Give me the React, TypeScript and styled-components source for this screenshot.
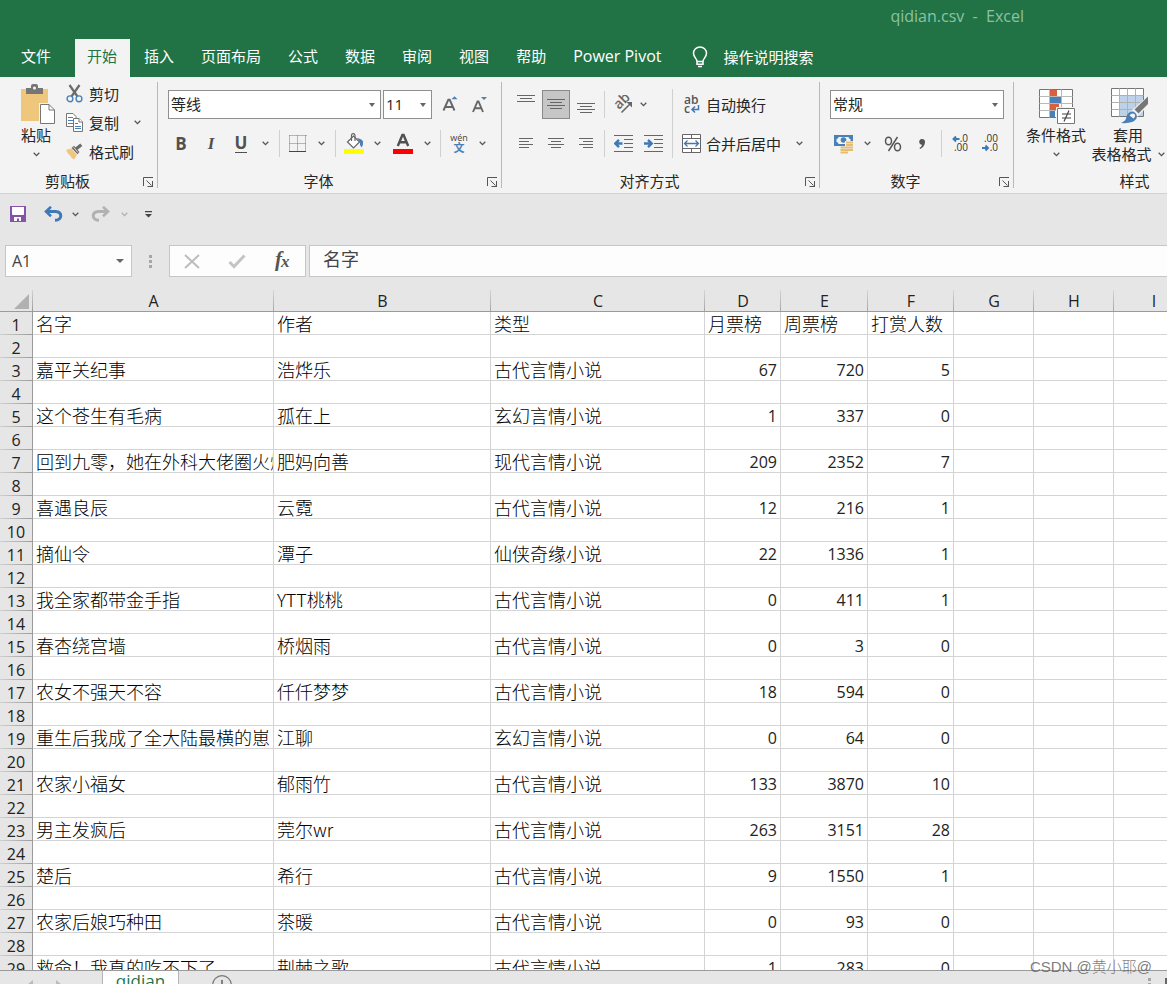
import React from "react";
import styled, { createGlobalStyle } from "styled-components";

const GlobalStyle = createGlobalStyle`
  *, *::before, *::after { box-sizing: border-box; }
  body { margin: 0; overflow: hidden; }
  button, input, select { font: inherit; color: inherit; }
`;

const ui = `"Open Sans", "Noto Sans CJK SC", sans-serif`;

const Shell = styled.div`
  position: relative;
  display: flex;
  flex-direction: column;
  height: 100vh;
  overflow: hidden;
  background: #e6e6e6;
  color: #262626;
  font-family: ${ui};
  font-size: 15px;
  line-height: 20px;
`;

/* Title bar and ribbon tabs */

const TopBar = styled.header`
  flex: none;
  background: #217346;
  color: #fff;
`;

const TitleRow = styled.div`
  display: flex;
  justify-content: flex-end;
  height: 39px;
  padding: 6px 143px 0 0;
  color: #8cc2a3;
  font-size: 16px;
  white-space: pre;
`;

const Tabs = styled.nav`
  display: flex;
  height: 38px;
`;

const Tab = styled.button<{ $active?: boolean; $file?: boolean; $latin?: boolean }>`
  flex: none;
  height: 38px;
  padding: ${(p) => (p.$file ? "0 24px 4px 21px" : p.$active ? "0 13px 4px 12px" : "0 13px 4px 14px")};
  border: 0;
  background: ${(p) => (p.$active ? "#f3f3f3" : "transparent")};
  color: ${(p) => (p.$active ? "#217346" : "#fff")};
  font-size: ${(p) => (p.$latin ? 16 : 15)}px;
  white-space: nowrap;
`;

const TellMe = styled.button`
  display: flex;
  align-items: center;
  gap: 15px;
  height: 38px;
  margin-left: 18px;
  padding: 0 0 2px;
  border: 0;
  background: transparent;
`;

/* Ribbon */

const Ribbon = styled.section`
  display: flex;
  flex: none;
  height: 117px;
  padding-top: 2px;
  overflow: hidden;
  background: #f3f3f3;
  border-bottom: 1px solid #d2d2d2;
`;

const Group = styled.div<{ $w: number }>`
  flex: none;
  width: ${(p) => p.$w}px;
  height: 109px;
  background: linear-gradient(#b8b8b8, #b8b8b8) right bottom / 1px 106px no-repeat;
`;

const GroupBody = styled.div<{ $pad: number; $gap?: number }>`
  display: flex;
  gap: ${(p) => p.$gap || 0}px;
  height: 94px;
  padding-left: ${(p) => p.$pad}px;
`;

const GroupFooter = styled.div`
  display: grid;
  grid-template-columns: 1fr 15px;
  gap: 0 8px;
  align-items: center;
  height: 16px;
  line-height: 16px;
  text-align: center;
`;

const Bare = styled.button<{ $w?: number; $h?: number }>`
  display: flex;
  flex: none;
  align-items: center;
  justify-content: center;
  width: ${(p) => (p.$w ? p.$w + "px" : "auto")};
  height: ${(p) => (p.$h ? p.$h + "px" : "auto")};
  padding: 0;
  border: 0;
  background: transparent;
  white-space: nowrap;
`;

const LauncherButton = styled(Bare)`
  justify-content: flex-start;
`;

const AlignButton = styled(Bare)<{ $pressed?: boolean }>`
  width: 28px;
  height: 29px;
  margin: 0 1px;
  border: 1px solid ${(p) => (p.$pressed ? "#8a8a8a" : "transparent")};
  background: ${(p) => (p.$pressed ? "#c6c6c6" : "transparent")};
`;

const Letter = styled.span<{ $kind: "b" | "i" | "u" }>`
  color: #505050;
  font-size: 17px;
  font-weight: 700;
  font-family: ${(p) => (p.$kind === "i" ? '"Liberation Serif", serif' : ui)};
  font-style: ${(p) => (p.$kind === "i" ? "italic" : "normal")};
  line-height: 18px;
  border-bottom: ${(p) => (p.$kind === "u" ? "1px solid #505050" : "0")};
`;

const Rule = styled.span<{ $w: number; $h?: number }>`
  flex: none;
  width: ${(p) => p.$w}px;
  height: ${(p) => p.$h || 27}px;
  background: linear-gradient(#d0d0d0, #d0d0d0) center / 1px 100% no-repeat;
`;

const Row = styled.div<{ $pad?: number }>`
  display: flex;
  align-items: center;
  height: 39px;
  padding-left: ${(p) => p.$pad || 0}px;
`;

const Stack = styled.div<{ $top?: number; $w?: number }>`
  display: flex;
  flex: none;
  flex-direction: column;
  width: ${(p) => (p.$w ? p.$w + "px" : "auto")};
  padding-top: ${(p) => p.$top || 0}px;
`;

const BigButton = styled.button<{ $w: number }>`
  display: flex;
  flex: none;
  flex-direction: column;
  align-items: center;
  width: ${(p) => p.$w}px;
  height: 91px;
  padding: 5px 0 0;
  border: 0;
  background: transparent;
  line-height: 19px;
  white-space: nowrap;
`;

const BigIcon = styled.span`
  display: block;
  height: 42px;
`;

const ChevronLine = styled.span`
  display: flex;
  align-items: center;
  gap: 6px;
  height: 19px;
`;

const ClipRow = styled.div`
  display: flex;
  align-items: center;
  height: 29px;
`;

const ClipButton = styled(Bare)`
  gap: 6px;
  margin-right: 10px;
`;

const WideButton = styled(Bare)`
  gap: 5px;
  margin-right: 9px;
`;

const Combo = styled.label<{ $w: number }>`
  position: relative;
  flex: none;
  width: ${(p) => p.$w}px;
  height: 29px;
  margin-right: 2px;
  background: #fff;
  border: 1px solid #8f8f8f;
`;

const ComboSelect = styled.select`
  width: 100%;
  height: 27px;
  padding: 0 2px 2px;
  border: 0;
  background: transparent;
  appearance: none;
  outline: 0;
`;

const ComboArrow = styled.span<{ $wide?: boolean }>`
  position: absolute;
  top: 50%;
  right: ${(p) => (p.$wide ? 7 : 5)}px;
  margin-top: -2px;
  border: solid transparent;
  border-width: ${(p) => (p.$wide ? "4px 4px 0" : "4px 3px 0")};
  border-top-color: #666;
  pointer-events: none;
`;

/* Quick access and formula bar */

const QuickAccess = styled.div`
  display: flex;
  flex: none;
  align-items: center;
  height: 51px;
  padding-bottom: 11px;
`;

const FormulaBar = styled.div`
  display: flex;
  flex: none;
  height: 32px;
  margin-bottom: 13px;
  padding-left: 5px;
`;

const NameBox = styled.label`
  position: relative;
  width: 127px;
  background: #fdfdfd;
  border: 1px solid #c6c6c6;
`;

const PlainInput = styled.input<{ $size: number; $pad: number }>`
  width: 100%;
  height: 30px;
  padding: 0 0 ${(p) => (p.$size > 16 ? 6 : 0)}px ${(p) => p.$pad}px;
  border: 0;
  background: transparent;
  color: #444;
  font-size: ${(p) => p.$size}px;
  outline: 0;
`;

const Grip = styled.span`
  display: flex;
  align-items: center;
  justify-content: center;
  width: 37px;
`;

const EntryButtons = styled.div`
  display: flex;
  align-items: center;
  width: 137px;
  margin-right: 3px;
  background: #fdfdfd;
  border: 1px solid #c6c6c6;
`;

const FormulaField = styled.div`
  flex: 1;
  background: #fdfdfd;
  border: 1px solid #c6c6c6;
  border-right: 0;
`;

/* Worksheet */

const SheetArea = styled.main`
  flex: 1;
  min-height: 0;
  overflow: hidden;
`;

const Sheet = styled.table`
  width: max(100%, 1194px);
  table-layout: fixed;
  border-collapse: separate;
  border-spacing: 0;
  background: #fff;
  color: #000;
  font-family: "Noto Sans CJK SC", sans-serif;
  font-size: 18px;
  font-weight: 300;
  line-height: 22px;
`;

const Col = styled.col<{ $w?: number }>`
  width: ${(p) => (p.$w ? p.$w + "px" : "auto")};
`;

const headType = `
  font-family: "Open Sans", sans-serif;
  font-size: 16px;
  font-weight: 400;
  color: #222;
  text-align: center;
`;

const ColHead = styled.th`
  ${headType}
  height: 22px;
  padding: 1px 0 0;
  line-height: 20px;
  border-bottom: 1px solid #9b9b9b;
  background: linear-gradient(#d4d4d4, #a6a6a6) right / 1px 100% no-repeat #e6e6e6;
`;

const Corner = styled(ColHead)`
  background: linear-gradient(#d4d4d4, #9b9b9b) right / 1px 100% no-repeat #e6e6e6;
  & > svg { display: block; margin: 0 0 0 14px; }
`;

const RowHead = styled.th`
  ${headType}
  height: 23px;
  padding: 2px 0 0;
  line-height: 20px;
  border-right: 1px solid #9b9b9b;
  background: linear-gradient(to right, #d0d0d0, #9b9b9b) bottom / 100% 1px no-repeat #e6e6e6;
`;

const Cell = styled.td<{ $num?: boolean }>`
  height: 23px;
  padding: ${(p) => (p.$num ? "2px 3px 0 0" : "0 0 0 3px")};
  overflow: hidden;
  border-right: 1px solid #d4d4d4;
  border-bottom: 1px solid #d4d4d4;
  font-family: ${(p) => (p.$num ? '"Open Sans", sans-serif' : "inherit")};
  font-size: ${(p) => (p.$num ? 16 : 18)}px;
  font-weight: ${(p) => (p.$num ? 400 : 300)};
  color: ${(p) => (p.$num ? "#222" : "#000")};
  line-height: ${(p) => (p.$num ? 20 : 22)}px;
  text-align: ${(p) => (p.$num ? "right" : "left")};
  white-space: nowrap;
`;

const SheetBar = styled.footer`
  display: flex;
  flex: none;
  height: 14px;
  overflow: hidden;
  border-top: 1px solid #9b9b9b;
`;

const SheetArrows = styled.div`
  display: flex;
  gap: 23px;
  width: 102px;
  padding: 9px 0 0 27px;
`;

const SheetTab = styled.button`
  width: 77px;
  height: 26px;
  padding: 0 0 6px;
  border: solid #b5b5b5;
  border-width: 0 1px;
  background: #fff;
  color: #217346;
  font-size: 17px;
`;

const AddSheet = styled(Bare)`
  align-self: flex-start;
  margin: 4px auto 0 33px;
`;

const BarEnd = styled.span`
  display: flex;
  gap: 14px;
  padding-top: 7px;
`;

const Watermark = styled.div`
  position: absolute;
  right: 15px;
  bottom: 7px;
  color: rgba(90, 90, 90, 0.8);
  font-family: "Liberation Sans", "Noto Sans CJK SC", sans-serif;
  font-size: 15px;
  font-weight: 300;
`;

/* Icons */

const Chevron = ({ color = "#555" }: { color?: string }) => (
  <svg width="7" height="5" viewBox="0 0 7 5" fill="none" stroke={color} strokeWidth="1.3">
    <path d="M.7 .8 3.5 3.6 6.3 .8" />
  </svg>
);

const Drop = ({ w, label, color }: { w: number; label: string; color?: string }) => (
  <Bare $w={w} $h={24} aria-label={label}>
    <Chevron color={color} />
  </Bare>
);

const Launcher = ({ label }: { label: string }) => (
  <LauncherButton aria-label={label}>
    <svg width="11" height="11" viewBox="0 0 11 11" fill="none" stroke="#555">
      <path d="M.5 10V1.5H10M3.5 4.5 8.5 9.5M9.5 5V10.5M10 10.500H4.5" />
    </svg>
  </LauncherButton>
);

const Bulb = () => (
  <svg width="16" height="22" viewBox="0 0 16 22" fill="none" stroke="#fff" strokeWidth="1.5">
    <path d="M5 15.5C5 12.5 1.5 11.5 1.5 7.3A6.5 6.4 0 0 1 14.5 7.3C14.5 11.5 11 12.5 11 15.5V18.2H5ZM5 15.6H11M6 20.6H10" />
  </svg>
);

const PasteIcon = () => (
  <svg width="40" height="40" viewBox="-4 0 40 40">
    <path d="M1 5H28V37H1Z" fill="#eec77d" />
    <path d="M6 4H11V2Q11 0 13 0H16Q18 0 18 2V4H23V10H6Z" fill="#767676" />
    <circle cx="14.5" cy="4" r="1.6" fill="#f3f3f3" />
    <path d="M19 19H29L36 26V40H19Z" fill="#f3f3f3" />
    <path d="M20.5 20.5H29L34.5 26V39.5H20.5Z" fill="#fff" stroke="#767676" />
    <path d="M29 20.5V26H34.5" fill="none" stroke="#767676" />
  </svg>
);

const CutIcon = () => (
  <svg width="17" height="19" viewBox="0 0 17 19" fill="none">
    <path d="M3.5 1 11.5 12.5M13.5 1 5.5 12.5" stroke="#6b6b6b" strokeWidth="2.2" />
    <circle cx="4" cy="14.8" r="2.9" stroke="#4a80b8" strokeWidth="1.4" />
    <circle cx="13" cy="14.8" r="2.9" stroke="#4a80b8" strokeWidth="1.4" />
  </svg>
);

const CopyIcon = () => (
  <svg width="17" height="19" viewBox="0 0 17 19" fill="#fff" stroke="#767676">
    <path d="M.5 .5H7L10 3.5V13.5H.5Z" />
    <path d="M2 4.5H7M2 7.5H7M2 10.5H7" stroke="#4a80b8" />
    <path d="M7.5 5.5H13L16.5 9V18.5H7.5Z" />
    <path d="M13 5.5V9H16.5" />
    <path d="M9 10.5H12M9 13.5H15M9 15.5H15" stroke="#4a80b8" />
  </svg>
);

const BrushIcon = () => (
  <svg width="17" height="17" viewBox="0 0 17 17">
    <path d="M0 7 5 5.5 11 12 8 16.5Q5 15 4.5 13L3.5 12Q1.5 10.5 0 7Z" fill="#eec77d" />
    <path d="M5.5 5 8 2.8 13.5 9 11.5 11.2Z" fill="#6b6b6b" />
    <path d="M10 6 15.3 1.8" stroke="#6b6b6b" strokeWidth="3.2" />
    <path d="M7.5 4.2 12 9.5" stroke="#f3f3f3" strokeWidth=".8" />
  </svg>
);

const GrowIcon = ({ down }: { down?: boolean }) => (
  <svg width="17" height="18" viewBox="0 0 17 18">
    <path
      d={down ? "M2 16 6.5 5.5H7.5L12 16M3.8 12.3H10.2" : "M1.5 14.5 6.3 3.8H7.7L12.5 14.5M3.5 11H10.5"}
      fill="none"
      stroke="#666"
      strokeWidth="1.9"
    />
    <path d={down ? "M10 1H16L13 4Z" : "M9.5 3.2H15.5L12.5 .2Z"} fill="#4a80b8" />
  </svg>
);

const BorderIcon = () => (
  <svg width="18" height="18" viewBox="0 0 18 18" fill="none" stroke="#777">
    <path d="M.5 .5H17.5M.5 .5V16M8.5 .5V16M16.5 .5V16M.5 8.5H17" strokeDasharray="1 1" />
    <path d="M0 16.5H17" stroke="#444" />
  </svg>
);

const FillIcon = () => (
  <svg width="20" height="21" viewBox="0 0 20 21">
    <path d="M4 8.5 9.5 3 15.5 9 9.5 15 3.5 9Z" fill="#fff" stroke="#666" strokeWidth="1.2" />
    <path d="M7.5 8V2.5Q7.5 .7 9.2 .7T11 2.5V8" fill="none" stroke="#666" strokeWidth="1.2" />
    <path d="M12.5 5Q18 5.5 19 8.5 19.6 12 17.5 14.5L16 12Q16.5 8.5 12.5 5Z" fill="#4a80b8" />
    <path d="M0 16H20V21H0Z" fill="#ff0" />
  </svg>
);

const FontColorIcon = () => (
  <svg width="20" height="21" viewBox="0 0 20 21">
    <path d="M4.8 13 9.4 2H10.6L15.2 13M6.5 9.2H13.5" fill="none" stroke="#505050" strokeWidth="2.4" />
    <path d="M0 16H20V21H0Z" fill="#f00" />
  </svg>
);

const PinyinIcon = () => (
  <svg width="18" height="22" viewBox="0 0 18 22">
    <text x="9" y="8" textAnchor="middle" fontSize="9" fontFamily="Open Sans, sans-serif" fill="#444">wén</text>
    <text x="9" y="19" textAnchor="middle" fontSize="11" fontWeight="700" fontFamily="Noto Sans CJK SC, sans-serif" fill="#4a80b8">文</text>
  </svg>
);

const LinesIcon = ({ d }: { d: string }) => (
  <svg width="20" height="27" viewBox="0 0 20 27" fill="none" stroke="#666">
    <path d={d} />
  </svg>
);

const OrientIcon = () => (
  <svg width="20" height="20" viewBox="0 0 20 20" fill="none" stroke="#666">
    <text transform="translate(6 15) rotate(-45)" fontSize="14" fontWeight="600" fontFamily="Open Sans, sans-serif" fill="#666" stroke="none">ab</text>
    <path d="M8.5 17.5 17.5 8.5" strokeWidth="1.6" />
    <path d="M13.5 7H19V12.5Z" fill="#666" stroke="none" />
  </svg>
);

const IndentIcon = ({ right }: { right?: boolean }) => (
  <svg width="19" height="17" viewBox="0 0 19 17" fill="none">
    <path d="M0 .5H19M10 4.5H19M10 8.5H19M10 12.5H19M0 16.5H19" stroke="#666" />
    <path
      d={right ? "M0 8.5H7M4 4.8 7.7 8.5 4 12.2" : "M8.5 8.5H1.5M5 4.8 1.2 8.5 5 12.2"}
      stroke="#3f79b5"
      strokeWidth="2.4"
    />
  </svg>
);

const WrapIcon = () => (
  <svg width="19" height="19" viewBox="0 0 19 19">
    <text x="2" y="9" fontSize="12" fontWeight="600" fontFamily="Open Sans, sans-serif" fill="#555">ab</text>
    <text x="2" y="18" fontSize="12" fontWeight="600" fontFamily="Open Sans, sans-serif" fill="#555">c</text>
    <path d="M16.5 10V14.5H10.5M13 11.5 10 14.5 13 17.5" fill="none" stroke="#3f79b5" strokeWidth="1.5" />
  </svg>
);

const MergeIcon = () => (
  <svg width="19" height="19" viewBox="0 0 19 19" fill="none" stroke="#666">
    <path d="M.5 .5H18.5V18.5H.5ZM.5 4.5H18.5M.5 14.5H18.5M9.5 .5V4.5M9.5 14.5V18.5" fill="#fff" />
    <path d="M2.5 9.5H16.5M5.5 6.5 2.5 9.5 5.5 12.5M13.5 6.5 16.5 9.5 13.5 12.5" stroke="#3f79b5" strokeWidth="1.3" />
  </svg>
);

const MoneyIcon = () => (
  <svg width="20" height="20" viewBox="0 0 20 20">
    <path d="M0 1H19V12H0Z" fill="#4a80b8" />
    <path d="M2.5 5Q4.5 5 4.5 3H14.5Q14.5 5 16.5 5V8Q14.5 8 14.5 10H4.5Q4.5 8 2.5 8Z" fill="#f3f3f3" />
    <circle cx="9.5" cy="6" r="2.8" fill="#4a80b8" />
    <path d="M11 7H20V17H14V20H6V12H11Z" fill="#f3f3f3" />
    <path d="M12 8.5H19M12 11H19M12 13.5H19M12 16H19M6.5 13.5H12M6.5 16H12M6.5 18.5H14" stroke="#e8bd70" strokeWidth="1.8" />
  </svg>
);

const DecimalIcon = ({ less }: { less?: boolean }) => (
  <svg width="17" height="19" viewBox="0 0 17 19" fontFamily="Open Sans, sans-serif" fontSize="10" fill="#333">
    <text x="16" y="8" textAnchor="end">{less ? ".00" : ".0"}</text>
    <text x="16" y="17" textAnchor="end">{less ? ".0" : ".00"}</text>
    <path
      d={less ? "M0 14H6M3.5 11.5 6 14 3.5 16.5" : "M7.5 5H1.5M4 2.5 1.5 5 4 7.5"}
      fill="none"
      stroke="#3f79b5"
      strokeWidth="1.9"
    />
  </svg>
);

const CondIcon = () => (
  <svg width="37" height="42" viewBox="-1 -5 37 42">
    <path d="M.5 .5H33.5V28.5H.5Z" fill="#fff" stroke="#767676" />
    <path d="M.5 7.5H33.5M.5 14.5H33.5M.5 21.5H33.5M10.5 .5V28.5M22.5 .5V28.5" stroke="#b9b9b9" />
    <path d="M11 1H18V7H11ZM11 15H20V21H11Z" fill="#d8603e" />
    <path d="M11 8H22V14H11ZM11 22H16V28H11Z" fill="#4a80b8" />
    <path d="M17 18H36V36H17Z" fill="#f3f3f3" />
    <path d="M18.5 19.5H35.5V34.5H18.5Z" fill="#fff" stroke="#767676" />
    <path d="M23 25H32M23 29H32M30 21.5 25 32.5" fill="none" stroke="#444" strokeWidth="1.2" />
  </svg>
);

const TableIcon = () => (
  <svg width="42" height="42" viewBox="-4 -4 42 42">
    <path d="M.5 .5H32.5V28.5H.5Z" fill="#fff" stroke="#767676" />
    <path d="M9 8H32V28H9Z" fill="#bdd1e8" />
    <path d="M.5 7.5H32.5M.5 14.5H32.5M.5 21.5H32.5M8.5 .5V28.5M16.5 .5V28.5M24.5 .5V28.5" stroke="#b0b0b0" fill="none" />
    <path d="M38 7V17L26 29 20 23Z" fill="#f3f3f3" />
    <path d="M37 8.5V16L27.5 25.5 23.5 21.5Z" fill="#767676" />
    <path d="M10 35Q15 33 15.5 28.5 17.5 23 22.5 23.5 27 26 25.5 30.5 22 36 10 35Z" fill="#4a80b8" />
    <path d="M18.5 27.5Q20.5 24.5 23.5 26 25 28.5 22.5 30.5 20 28.5 18.5 27.5Z" fill="#f3f3f3" />
  </svg>
);

const SaveIcon = () => (
  <svg width="16" height="16" viewBox="0 0 16 16">
    <path d="M0 0H16V16H0Z" fill="#8553a8" />
    <path d="M2 1H14V8Q14 9 13 9H3Q2 9 2 8ZM4 11H11V15H9V12.5H7V15H4Z" fill="#fff" />
  </svg>
);

const UndoIcon = ({ redo }: { redo?: boolean }) => (
  <svg width="19" height="16" viewBox="0 0 19 16" fill="none" stroke={redo ? "#b1b1b1" : "#3f79b5"}>
    <g transform={redo ? "translate(19 0) scale(-1 1)" : undefined}>
      <path d="M2 5.5H11.5Q16.8 6 16.8 10 16.5 14 11 14.3" strokeWidth="3" />
      <path d="M7 .8 2 5.5 7 10.2" strokeWidth="2.6" />
    </g>
  </svg>
);

const columns = [33, 241, 217, 214, 76, 87, 86, 80, 80];
const letters = ["A", "B", "C", "D", "E", "F", "G", "H", "I"];

type Book = [string, string, string, number, number, number];

const books: Book[] = [
  ["嘉平关纪事", "浩烨乐", "古代言情小说", 67, 720, 5],
  ["这个苍生有毛病", "孤在上", "玄幻言情小说", 1, 337, 0],
  ["回到九零，她在外科大佬圈火爆了", "肥妈向善", "现代言情小说", 209, 2352, 7],
  ["喜遇良辰", "云霓", "古代言情小说", 12, 216, 1],
  ["摘仙令", "潭子", "仙侠奇缘小说", 22, 1336, 1],
  ["我全家都带金手指", "YTT桃桃", "古代言情小说", 0, 411, 1],
  ["春杏绕宫墙", "桥烟雨", "古代言情小说", 0, 3, 0],
  ["农女不强天不容", "仟仟梦梦", "古代言情小说", 18, 594, 0],
  ["重生后我成了全大陆最横的崽", "江聊", "玄幻言情小说", 0, 64, 0],
  ["农家小福女", "郁雨竹", "古代言情小说", 133, 3870, 10],
  ["男主发疯后", "莞尔wr", "古代言情小说", 263, 3151, 28],
  ["楚后", "希行", "古代言情小说", 9, 1550, 1],
  ["农家后娘巧种田", "茶暖", "古代言情小说", 0, 93, 0],
  ["救命！我真的吃不下了", "荆棘之歌", "古代言情小说", 1, 283, 0],
];

const rows: (string | number)[][] = [["名字", "作者", "类型", "月票榜", "周票榜", "打赏人数"]];
books.forEach((book) => rows.push([], book));

const tabs = ["插入", "页面布局", "公式", "数据", "审阅", "视图", "帮助"];

const Footer = ({ name, launcher = true }: { name: string; launcher?: boolean }) => (
  <GroupFooter>
    <span>{name}</span>
    {launcher && <Launcher label={name + "设置"} />}
  </GroupFooter>
);

const Picker = ({ w, label, value }: { w: number; label: string; value: string }) => (
  <Combo $w={w}>
    <ComboSelect aria-label={label} defaultValue={value}>
      <option>{value}</option>
    </ComboSelect>
    <ComboArrow />
  </Combo>
);

export default function App() {
  return (
    <Shell>
      <GlobalStyle />
      <TopBar>
        <TitleRow>qidian.csv  -  Excel</TitleRow>
        <Tabs>
          <Tab $file>文件</Tab>
          <Tab $active>开始</Tab>
          {tabs.map((t) => (
            <Tab key={t}>{t}</Tab>
          ))}
          <Tab $latin>Power Pivot</Tab>
          <TellMe>
            <Bulb />
            操作说明搜索
          </TellMe>
        </Tabs>
      </TopBar>

      <Ribbon>
        <Group $w={158}>
          <GroupBody $pad={9} $gap={3}>
            <BigButton $w={54}>
              <BigIcon><PasteIcon /></BigIcon>
              粘贴
              <ChevronLine><Chevron /></ChevronLine>
            </BigButton>
            <Stack>
              <ClipRow><ClipButton><CutIcon />剪切</ClipButton></ClipRow>
              <ClipRow><ClipButton><CopyIcon />复制</ClipButton><Drop w={16} label="复制选项" /></ClipRow>
              <ClipRow><ClipButton><BrushIcon />格式刷</ClipButton></ClipRow>
            </Stack>
          </GroupBody>
          <Footer name="剪贴板" />
        </Group>

        <Group $w={344}>
          <GroupBody $pad={8}>
            <Stack $top={6}>
              <Row $pad={2}>
                <Picker w={213} label="字体" value="等线" />
                <Picker w={49} label="字号" value="11" />
                <Bare $w={32} $h={28} aria-label="增大字号"><GrowIcon /></Bare>
                <Bare $w={26} $h={28} aria-label="减小字号"><GrowIcon down /></Bare>
              </Row>
              <Row>
                <Bare $w={30} $h={28}><Letter $kind="b">B</Letter></Bare>
                <Bare $w={30} $h={28}><Letter $kind="i">I</Letter></Bare>
                <Bare $w={30} $h={28}><Letter $kind="u">U</Letter></Bare>
                <Drop w={18} label="下划线选项" />
                <Rule $w={10} />
                <Bare $w={28} aria-label="边框"><BorderIcon /></Bare>
                <Drop w={18} label="边框选项" />
                <Rule $w={10} />
                <Bare $w={28} aria-label="填充颜色"><FillIcon /></Bare>
                <Drop w={18} label="填充颜色选项" />
                <Bare $w={34} aria-label="字体颜色"><FontColorIcon /></Bare>
                <Drop w={14} label="字体颜色选项" />
                <Rule $w={12} />
                <Bare $w={26} aria-label="拼音"><PinyinIcon /></Bare>
                <Drop w={20} label="拼音选项" />
              </Row>
            </Stack>
          </GroupBody>
          <Footer name="字体" />
        </Group>

        <Group $w={318}>
          <GroupBody $pad={9}>
            <Stack $top={6} $w={158}>
              <Row>
                <AlignButton aria-label="顶端对齐"><LinesIcon d="M1 4.5H19M4 7.5H16M1 10.5H19" /></AlignButton>
                <AlignButton $pressed aria-label="垂直居中"><LinesIcon d="M1 8.5H19M4 11.5H16M1 14.5H19M4 17.5H16" /></AlignButton>
                <AlignButton aria-label="底端对齐"><LinesIcon d="M1 12.5H19M4 15.5H16M1 18.5H19M4 21.5H16" /></AlignButton>
                <Rule $w={7} />
                <Bare $w={30} aria-label="方向"><OrientIcon /></Bare>
                <Drop w={10} label="方向选项" />
              </Row>
              <Row>
                <AlignButton aria-label="左对齐"><LinesIcon d="M3 8.5H17M3 11.5H13M3 14.5H17M3 17.5H13" /></AlignButton>
                <AlignButton aria-label="居中"><LinesIcon d="M2 8.5H18M5 11.5H15M2 14.5H18M5 17.5H15" /></AlignButton>
                <AlignButton aria-label="右对齐"><LinesIcon d="M3 8.5H17M7 11.5H17M3 14.5H17M7 17.5H17" /></AlignButton>
                <Rule $w={7} />
                <Bare $w={30} aria-label="减少缩进量"><IndentIcon /></Bare>
                <Bare $w={30} aria-label="增加缩进量"><IndentIcon right /></Bare>
              </Row>
            </Stack>
            <Stack $top={10}>
              <Rule $w={7} $h={69} />
            </Stack>
            <Stack $top={6}>
              <Row $pad={6}><WideButton><WrapIcon />自动换行</WideButton></Row>
              <Row $pad={6}><WideButton><MergeIcon />合并后居中</WideButton><Drop w={18} label="合并选项" /></Row>
            </Stack>
          </GroupBody>
          <Footer name="对齐方式" />
        </Group>

        <Group $w={194}>
          <GroupBody $pad={10}>
            <Stack $top={6}>
              <Row>
                <Picker w={174} label="数字格式" value="常规" />
              </Row>
              <Row>
                <Bare $w={27} aria-label="会计数字格式"><MoneyIcon /></Bare>
                <Drop w={20} label="会计格式选项" />
                <Bare $w={32} aria-label="百分比样式">
                  <svg width="18" height="18" viewBox="0 0 18 18" fill="none" stroke="#555" strokeWidth="1.5">
                    <ellipse cx="4.5" cy="6" rx="3" ry="3.8" />
                    <ellipse cx="13.5" cy="12" rx="3" ry="3.8" />
                    <path d="M13.5 2 4.5 16" />
                  </svg>
                </Bare>
                <Bare $w={26} aria-label="千位分隔样式">
                  <svg width="8" height="12" viewBox="0 0 8 12">
                    <path d="M4 1Q7 1 7 4 7 8.5 2 11L1.5 10Q4 8.5 4 6.8 1.2 6.5 1.2 3.8 1.3 1.2 4 1Z" fill="#555" />
                  </svg>
                </Bare>
                <Rule $w={12} />
                <Bare $w={26} aria-label="增加小数位数"><DecimalIcon /></Bare>
                <Bare $w={34} aria-label="减少小数位数"><DecimalIcon less /></Bare>
              </Row>
            </Stack>
          </GroupBody>
          <Footer name="数字" />
        </Group>

        <Group $w={264}>
          <GroupBody $pad={7}>
            <BigButton $w={70}>
              <BigIcon><CondIcon /></BigIcon>
              条件格式
              <ChevronLine><Chevron /></ChevronLine>
            </BigButton>
            <BigButton $w={74}>
              <BigIcon><TableIcon /></BigIcon>
              套用
              <ChevronLine>表格格式<Chevron /></ChevronLine>
            </BigButton>
          </GroupBody>
          <Footer name="样式" launcher={false} />
        </Group>
      </Ribbon>

      <QuickAccess>
        <Bare $w={36} aria-label="保存"><SaveIcon /></Bare>
        <Bare $w={34} aria-label="撤消"><UndoIcon /></Bare>
        <Drop w={10} label="撤消选项" />
        <Bare $w={40} aria-label="恢复"><UndoIcon redo /></Bare>
        <Drop w={8} label="恢复选项" color="#b1b1b1" />
        <Bare $w={40} aria-label="自定义快速访问工具栏">
          <svg width="7" height="7" viewBox="0 0 7 7"><path d="M0 0H7V1.2H0ZM0 3H7L3.5 6.5Z" fill="#444" /></svg>
        </Bare>
      </QuickAccess>

      <FormulaBar>
        <NameBox>
          <PlainInput $size={16} $pad={6} aria-label="名称框" defaultValue="A1" />
          <ComboArrow $wide />
        </NameBox>
        <Grip>
          <svg width="3" height="13" viewBox="0 0 3 13" fill="#a6a6a6"><path d="M0 0H3V3H0ZM0 5H3V8H0ZM0 10H3V13H0Z" /></svg>
        </Grip>
        <EntryButtons>
          <Bare $w={44} aria-label="取消">
            <svg width="16" height="15" viewBox="0 0 16 15" fill="none" stroke="#bdbdbd" strokeWidth="2"><path d="M1 1 15 14M15 1 1 14" /></svg>
          </Bare>
          <Bare $w={45} aria-label="输入">
            <svg width="18" height="15" viewBox="0 0 18 15" fill="none" stroke="#c4c4c4" strokeWidth="3"><path d="M1.5 8 6 12.5 16.5 1.5" /></svg>
          </Bare>
          <Bare $w={45} aria-label="插入函数">
            <svg width="20" height="22" viewBox="-1 0 20 22" fontFamily="Liberation Serif, serif" fontStyle="italic" fontWeight="700" fill="#555">
              <text x="2" y="16" fontSize="21">f</text>
              <text x="8" y="17" fontSize="17">x</text>
            </svg>
          </Bare>
        </EntryButtons>
        <FormulaField>
          <PlainInput $size={18} $pad={13} aria-label="编辑栏" defaultValue="名字" />
        </FormulaField>
      </FormulaBar>

      <SheetArea>
        <Sheet>
          <colgroup>
            {columns.map((w, i) => (
              <Col key={i} $w={w} />
            ))}
            <Col />
          </colgroup>
          <thead>
            <tr>
              <Corner aria-label="全选">
                <svg width="15" height="15" viewBox="0 0 15 15"><path d="M15 0V15H0Z" fill="#b1b1b1" /></svg>
              </Corner>
              {letters.map((l) => (
                <ColHead key={l} scope="col">{l}</ColHead>
              ))}
            </tr>
          </thead>
          <tbody>
            {rows.map((row, r) => (
              <tr key={r}>
                <RowHead scope="row">{r + 1}</RowHead>
                {letters.map((l, c) => (
                  <Cell key={l} $num={typeof row[c] === "number"}>{row[c]}</Cell>
                ))}
              </tr>
            ))}
          </tbody>
        </Sheet>
      </SheetArea>

      <SheetBar>
        <SheetArrows>
          <svg width="6" height="10" viewBox="0 0 6 10"><path d="M6 0V10L0 5Z" fill="#bbb" /></svg>
          <svg width="6" height="10" viewBox="0 0 6 10"><path d="M0 0V10L6 5Z" fill="#bbb" /></svg>
        </SheetArrows>
        <SheetTab>qidian</SheetTab>
        <AddSheet aria-label="新工作表">
          <svg width="20" height="20" viewBox="0 0 20 20" fill="none" stroke="#777"><circle cx="10" cy="10" r="9.3" strokeWidth="1.2" /><path d="M10 5V15M5 10H15" strokeWidth="1.8" /></svg>
        </AddSheet>
        <BarEnd>
          <svg width="3" height="13" viewBox="0 0 3 13" fill="#a6a6a6"><path d="M0 0H3V3H0ZM0 5H3V8H0Z" /></svg>
          <svg width="2" height="10" viewBox="0 0 2 10"><path d="M0 0H2V10H0Z" fill="#666" /></svg>
        </BarEnd>
      </SheetBar>
      <Watermark>CSDN @黄小耶@</Watermark>
    </Shell>
  );
}
